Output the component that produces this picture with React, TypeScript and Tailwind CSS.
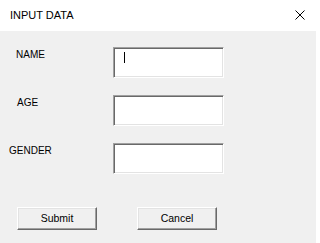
import React from "react";

const font = { fontFamily: '"Liberation Sans", Arial, sans-serif' };

function Row({ label, pl, cursor }: { label: string; pl: string; cursor?: boolean }) {
  return (
    <div className="flex h-[31px]">
      <div className={`w-[113px] pt-[2px] text-[10px] leading-[12px] text-black ${pl}`}>{label}</div>
      <div className="flex h-[31px] w-[111px] border border-t-[#a0a0a0] border-l-[#a0a0a0] border-r-white border-b-white bg-white pl-[10px] pt-[4px] shadow-[inset_1px_1px_0_#696969,inset_-1px_-1px_0_#e3e3e3]">
        {cursor && <div className="h-[11px] w-px bg-black" />}
      </div>
    </div>
  );
}

function Btn({ children }: { children: React.ReactNode }) {
  return (
    <div className="flex h-[23px] w-[80px] items-center justify-center border border-t-white border-l-white border-r-[#696969] border-b-[#696969] bg-[#f0f0f0] text-[10.5px] text-black shadow-[inset_-1px_-1px_0_#a0a0a0,inset_1px_1px_0_#e3e3e3]">
      {children}
    </div>
  );
}

export default function App() {
  return (
    <div className="h-[243px] w-[316px] overflow-hidden bg-white" style={font}>
      <div className="flex h-[31px] items-start justify-between bg-white pl-[10px] pr-[11px]">
        <div className="pt-[9px] text-[11px] leading-[13px] text-black">INPUT DATA</div>
        <svg className="mt-[10px]" width="10" height="10" viewBox="0 0 10 10">
          <path d="M0.5 0.5 L9.5 9.5 M9.5 0.5 L0.5 9.5" stroke="#000" strokeWidth="1" fill="none" />
        </svg>
      </div>
      <div className="h-[212px] bg-[#f0f0f0] pt-[16px]">
        <div className="flex flex-col gap-[17px]">
          <Row label="NAME" pl="pl-[16px]" cursor />
          <Row label="AGE" pl="pl-[17px]" />
          <Row label="GENDER" pl="pl-[9px]" />
        </div>
        <div className="mt-[33px] flex gap-[40px] pl-[17px]">
          <Btn>Submit</Btn>
          <Btn>Cancel</Btn>
        </div>
      </div>
    </div>
  );
}
